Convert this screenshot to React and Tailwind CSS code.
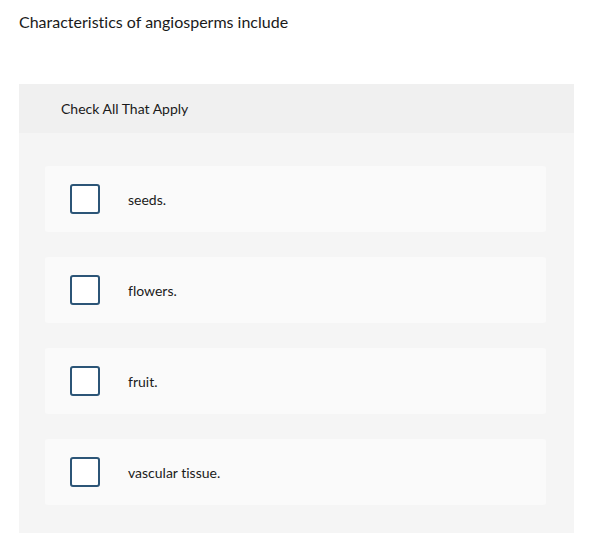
import React from 'react'

const options = ['seeds.', 'flowers.', 'fruit.', 'vascular tissue.']

const App = () => {
  return (
    <div
      className="min-h-screen bg-white text-[#1a1a1a] [font-variant-ligatures:none]"
      style={{ fontFamily: 'Lato, "Open Sans", sans-serif' }}
    >
      <div className="pt-[12px] px-[19px]">
        <p className="text-[16px] leading-[20px]">Characteristics of angiosperms include</p>

        <div className="mt-[52px] w-[555px] bg-[#f5f5f5]">
          {/* header */}
          <div className="h-[49px] bg-[#f0f0f0] pl-[42px] flex items-center text-[14px]">
            Check All That Apply
          </div>

          <div className="pt-[33px] pb-[28px] pl-[26px] flex flex-col gap-[25px]">
            {options.map((opt) => (
              <label key={opt} className="w-[501px] h-[66px] bg-[#fafafa] rounded-[3px] flex items-center pl-[25px]">
                <span className="w-[30px] h-[30px] border-2 border-[#2c5577] rounded-[3px] bg-white shrink-0" />
                <span className="ml-[28px] text-[14px]">{opt}</span>
              </label>
            ))}
          </div>
        </div>
      </div>
    </div>
  )
}

export default App
